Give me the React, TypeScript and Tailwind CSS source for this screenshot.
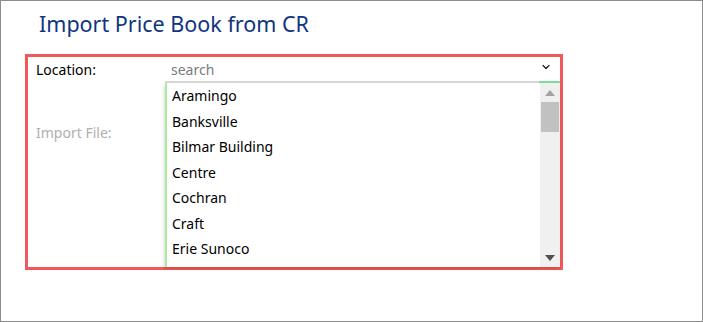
import { ChevronDown } from "lucide-react";

const locations = [
  "Aramingo",
  "Banksville",
  "Bilmar Building",
  "Centre",
  "Cochran",
  "Craft",
  "Erie Sunoco",
];

export default function App() {
  return (
    <div className="w-[703px] h-[322px] border border-[#8c8c8c] bg-white font-['Noto_Sans',sans-serif] overflow-hidden">
      {/* Title */}
      <h1 className="pl-[38px] pt-[8px] h-[53px] text-[21.5px] leading-[30px] text-[#0f3580]">
        Import Price Book from CR
      </h1>

      {/* Form box */}
      <div className="relative ml-[24px] w-[538px] h-[216px] border-[3px] border-[#f0585c]">
        <div className="flex items-center h-[24px]">
          <span className="w-[137px] pl-[8px] text-[14px] text-black">Location:</span>
          <div className="flex-1 flex items-center justify-between pl-[6px] pr-[8px]">
            <span className="text-[14px] text-[#7a7a7a]">search</span>
            <ChevronDown className="w-[12px] h-[12px] text-[#222] -mt-[5px]" strokeWidth={2.5} />
          </div>
        </div>

        <div className="mt-[41px] pl-[8px] text-[14px] text-[#b0b0b0]">Import File:</div>

        {/* Dropdown list */}
        <div className="absolute left-[137px] top-[24px] right-0 bottom-0 flex flex-col">
          <div className="flex h-[2px]">
            <div className="flex-1 bg-[#d6d6d6]" />
            <div className="w-[21px] bg-[#7fdca0]" />
          </div>
          <div className="flex flex-1 min-h-0 bg-white border-l-2 border-[#a8ec9c] shadow-[-1px_2px_3px_rgba(0,0,0,0.15)]">
            <ul className="flex-1 overflow-hidden pl-[5px]">
              {locations.map((loc) => (
                <li key={loc} className="h-[25.5px] leading-[25.5px] text-[14px] text-black whitespace-nowrap">
                  {loc}
                </li>
              ))}
            </ul>
            <div className="w-[20px] bg-[#f0f0f0] flex flex-col items-center">
              <div className="h-[19px] flex items-center justify-center">
                <svg width="10" height="6" viewBox="0 0 10 6">
                  <path d="M0 6 L5 0 L10 6 Z" fill="#a3a3a3" />
                </svg>
              </div>
              <div className="w-[18px] h-[30px] bg-[#c1c1c1]" />
              <div className="flex-1" />
              <div className="h-[19px] flex items-center justify-center">
                <svg width="10" height="6" viewBox="0 0 10 6">
                  <path d="M0 0 L10 0 L5 6 Z" fill="#505050" />
                </svg>
              </div>
            </div>
          </div>
        </div>
      </div>
    </div>
  );
}
